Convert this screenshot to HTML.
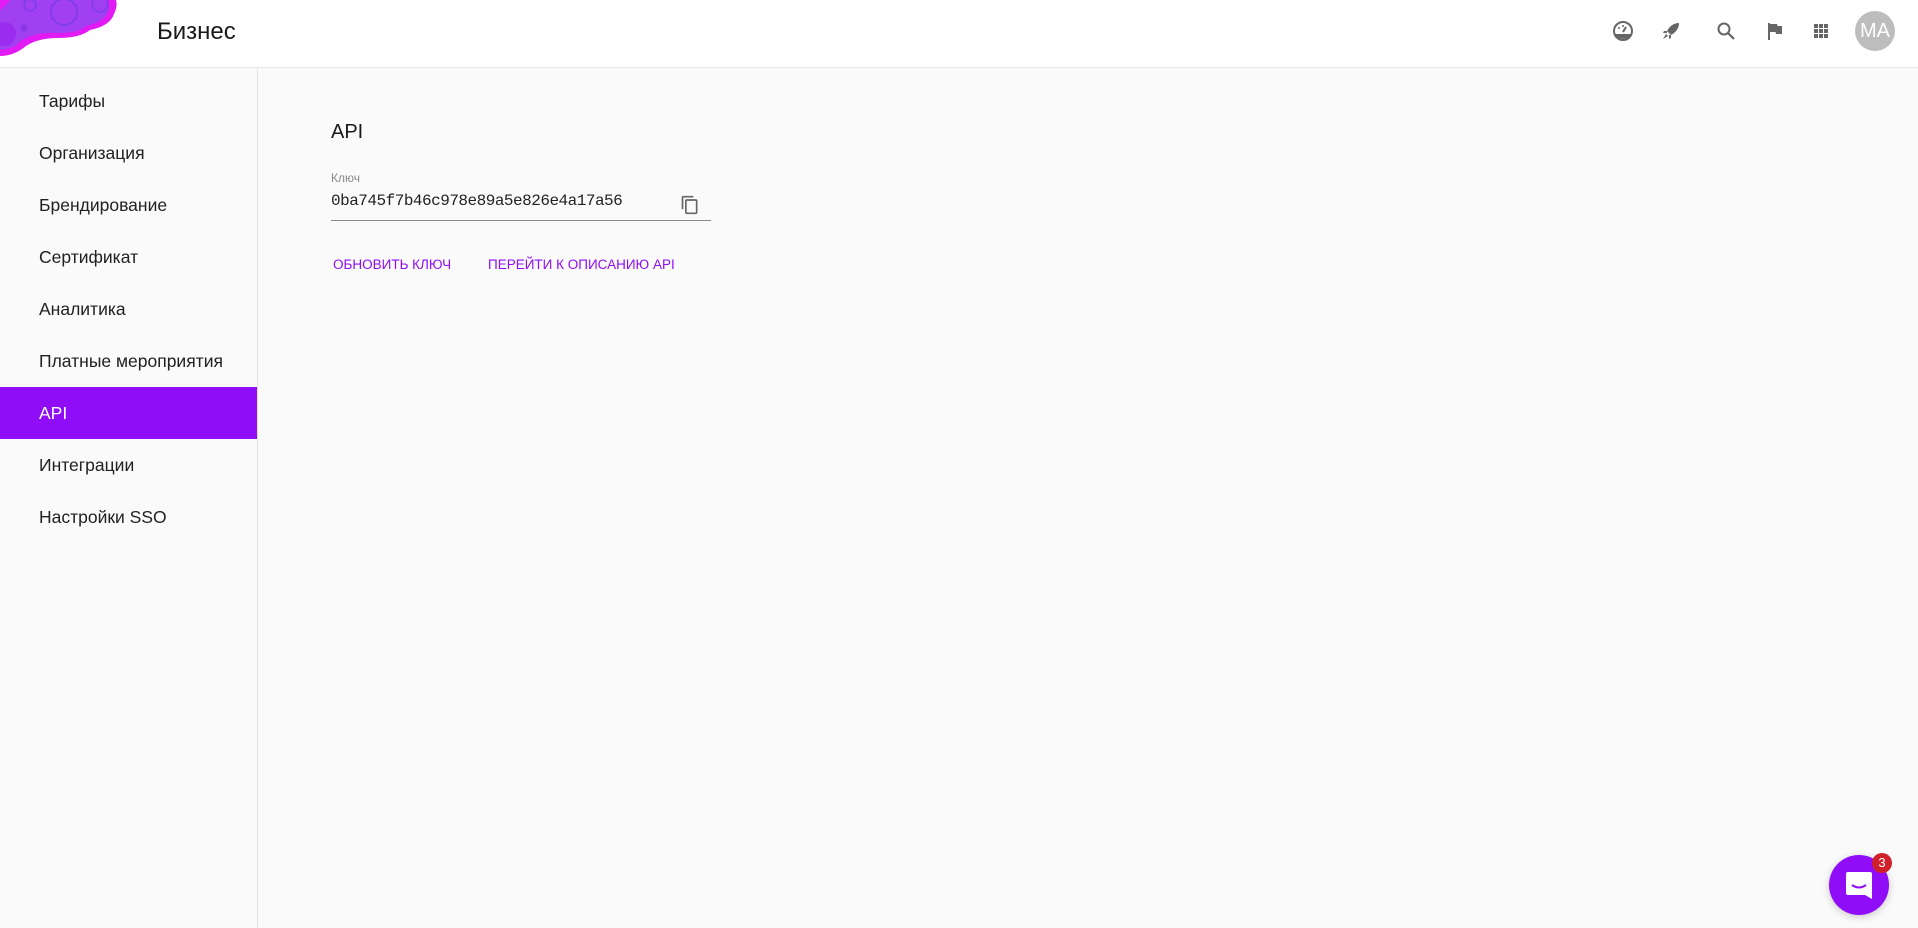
<!DOCTYPE html>
<html><head><meta charset="utf-8"><style>
*{margin:0;padding:0;box-sizing:border-box}
body{width:1918px;height:928px;overflow:hidden;background:#fafafa;font-family:"Liberation Sans",sans-serif;position:relative;color:#212121}
.hdr{position:absolute;left:0;top:0;width:1918px;height:68px;background:#fff;border-bottom:1px solid #e6e6e6}
.side{position:absolute;left:0;top:68px;width:258px;height:860px;background:#fafafa;border-right:1px solid #e3e3e3;padding-top:7px}
.side div{height:52px;line-height:52px;padding-left:39px;font-size:17.5px;color:#212121}
.side .act{background:#8f0df7;color:#fff}
.ic{position:absolute;top:19px}
</style></head><body>
<div class="hdr">
<svg style="position:absolute;left:0;top:0" width="120" height="60" viewBox="0 0 120 60">
<path d="M0 4 L0 56 Q14 56 26 46 Q38 38 58 38 Q80 38 90 30 Q110 26 114 14 Q118 6 116 0 L0 0 Z" fill="#e21bf5"/>
<path d="M0 10 L0 50 Q12 50 22 40 Q36 32 56 33 Q76 34 86 26 Q104 22 108 12 Q110 6 108 0 L10 0 Q6 6 0 10Z" fill="#a040f0"/>
<circle cx="64" cy="12" r="13" fill="none" stroke="#7a3de8" stroke-width="1.5"/>
<circle cx="30" cy="5" r="6" fill="none" stroke="#7a3de8" stroke-width="1.5"/>
<circle cx="100" cy="4" r="8" fill="none" stroke="#7a3de8" stroke-width="1.5"/>
<circle cx="24" cy="28" r="3.5" fill="#8a38e8"/>
<circle cx="4" cy="34" r="12" fill="#9a2cf0"/>
</svg>
<div style="position:absolute;left:157px;top:18px;font-size:24px;color:#1a1a1a">Бизнес</div>
<svg class="ic" style="left:1611px" width="24" height="24" viewBox="0 0 24 24"><circle cx="12" cy="12" r="9" fill="none" stroke="#666" stroke-width="2"/><path d="M4 15 A9 9 0 0 0 20 15 Z" fill="#666"/><path d="M12 13 L15 8" stroke="#666" stroke-width="2"/><circle cx="8" cy="9" r="1" fill="#666"/><circle cx="12" cy="7" r="1" fill="#666"/></svg>
<svg class="ic" style="left:1659px" width="24" height="24" viewBox="0 0 24 24"><path d="M20 4 C14 4 10 8 8 12 L12 16 C16 14 20 10 20 4Z M8 12 L5 12 L4 14 L8 14Z M12 16 L12 19 L10 20 L10 16Z M7 15 L4 20 L9 17Z" fill="#666"/></svg>
<svg class="ic" style="left:1714px" width="24" height="24" viewBox="0 0 24 24"><circle cx="10" cy="10" r="5.5" fill="none" stroke="#666" stroke-width="2"/><path d="M14 14 L20 20" stroke="#666" stroke-width="2.2"/></svg>
<svg class="ic" style="left:1763px" width="24" height="24" viewBox="0 0 24 24"><path d="M5 4 H7 V21 H5Z M7 5 H14 L14.5 7 H19 V15 H13 L12.5 13 H7Z" fill="#666"/></svg>
<svg class="ic" style="left:1809px" width="24" height="24" viewBox="0 0 24 24" fill="#666"><rect x="5" y="5" width="4" height="4"/><rect x="10" y="5" width="4" height="4"/><rect x="15" y="5" width="4" height="4"/><rect x="5" y="10" width="4" height="4"/><rect x="10" y="10" width="4" height="4"/><rect x="15" y="10" width="4" height="4"/><rect x="5" y="15" width="4" height="4"/><rect x="10" y="15" width="4" height="4"/><rect x="15" y="15" width="4" height="4"/></svg>
<div style="position:absolute;left:1855px;top:11px;width:40px;height:40px;border-radius:50%;background:#bdbdbd;color:#fff;font-size:20px;line-height:40px;text-align:center">MA</div>
</div>
<div class="side">
<div>Тарифы</div><div>Организация</div><div>Брендирование</div><div>Сертификат</div><div>Аналитика</div><div>Платные мероприятия</div><div class="act">API</div><div>Интеграции</div><div>Настройки SSO</div>
</div>
<div style="position:absolute;left:331px;top:121px;font-size:20px;color:#1a1a1a">API</div>
<div style="position:absolute;left:331px;top:171px;font-size:12px;color:#888">Ключ</div>
<div style="position:absolute;left:331px;top:192px;font-size:16px;font-family:'Liberation Mono',monospace;color:#222;letter-spacing:-.5px">0ba745f7b46c978e89a5e826e4a17a56</div>
<svg style="position:absolute;left:680px;top:195px" width="20" height="20" viewBox="0 0 24 24"><path d="M16 1H4c-1.1 0-2 .9-2 2v14h2V3h12V1zm3 4H8c-1.1 0-2 .9-2 2v14c0 1.1.9 2 2 2h11c1.1 0 2-.9 2-2V7c0-1.1-.9-2-2-2zm0 16H8V7h11v14z" fill="#666"/></svg>
<div style="position:absolute;left:331px;top:220px;width:380px;height:1px;background:#8a8a8a"></div>
<div style="position:absolute;left:333px;top:257px;font-size:13.5px;color:#8f0df7">ОБНОВИТЬ КЛЮЧ</div>
<div style="position:absolute;left:488px;top:257px;font-size:13.5px;color:#8f0df7">ПЕРЕЙТИ К ОПИСАНИЮ API</div>
<div style="position:absolute;left:1829px;top:855px;width:60px;height:60px;border-radius:50%;background:#8f0df7;box-shadow:0 2px 8px rgba(0,0,0,.2)">
<svg style="position:absolute;left:16px;top:16px" width="28" height="30" viewBox="0 0 28 30"><path d="M3 1H25a2 2 0 0 1 2 2V28L20 24H3a2 2 0 0 1-2-2V3a2 2 0 0 1 2-2Z" fill="#fff"/><path d="M7 14 Q14 19 21 14" stroke="#8f0df7" stroke-width="2" fill="none"/></svg>
</div>
<div style="position:absolute;left:1872px;top:853px;width:20px;height:20px;border-radius:50%;background:#d0202a;color:#fff;font-size:13px;line-height:20px;text-align:center">3</div>
</body></html>
